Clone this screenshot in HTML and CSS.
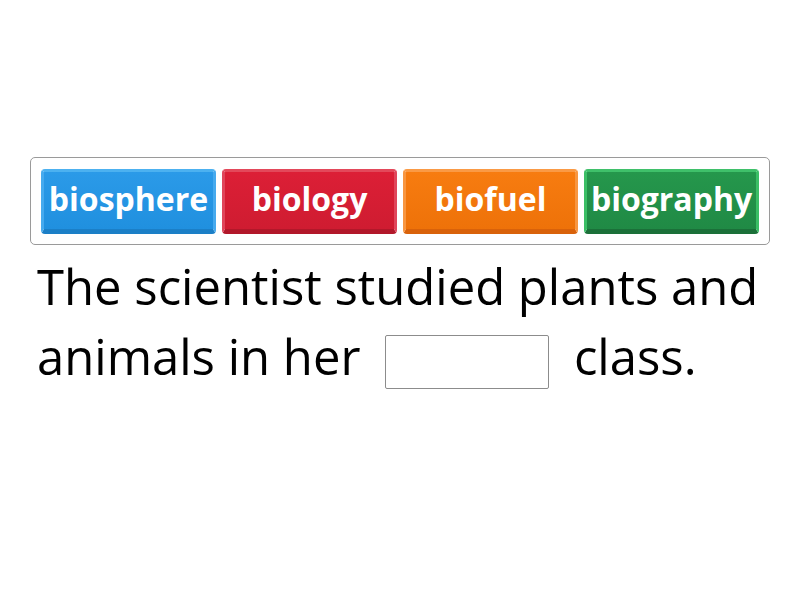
FILE: index.html
```html
<!DOCTYPE html>
<html>
<head>
<meta charset="utf-8">
<link rel="stylesheet" href="styles.css">
</head>
<body>
<div class="page">
  <div class="bank">
    <div class="tile blue">biosphere</div>
    <div class="tile red">biology</div>
    <div class="tile orange">biofuel</div>
    <div class="tile green">biography</div>
  </div>
  <p class="sentence">The scientist studied plants and animals in her <span class="gap"></span> class.</p>
</div>
</body>
</html>
```
FILE: styles.css
```css
html, body {
  margin: 0;
  padding: 0;
  background: #ffffff;
}
.page {
  width: 800px;
  height: 600px;
  padding-top: 157px;
  box-sizing: border-box;
}
.bank {
  margin-left: 30px;
  width: 740px;
  height: 88px;
  box-sizing: border-box;
  border: 1px solid #9a9a9a;
  border-radius: 5px;
  padding: 11px 10px;
  display: flex;
  gap: 6px;
}
.tile {
  width: 175px;
  height: 65px;
  box-sizing: border-box;
  border-radius: 4px;
  color: #ffffff;
  font-family: "Open Sans", sans-serif;
  font-weight: 700;
  font-size: 32px;
  display: flex;
  align-items: center;
  justify-content: center;
  white-space: nowrap;
  border-style: solid;
  border-width: 3px 3px 5px 3px;
  padding-bottom: 4px;
}
.blue {
  background: linear-gradient(#2b9ae8, #2090df);
  border-color: #4cb1f0 #46aaee #1b7fc7 #46aaee;
}
.red {
  background: linear-gradient(#dc1f36, #cf1c31);
  border-color: #e3485a #e0455a #b2182a #e0455a;
}
.orange {
  background: linear-gradient(#f77c10, #ee7209);
  border-color: #fa9a45 #f89640 #d9620a #f89640;
}
.green {
  background: linear-gradient(#25974c, #208a45);
  border-color: #3fc06a #3bbf66 #1b7039 #3bbf66;
}
.sentence {
  margin: 6px 0 0 37px;
  width: 740px;
  font-family: "Open Sans", sans-serif;
  font-size: 49px;
  line-height: 70px;
  color: #000000;
}
.gap {
  display: inline-block;
  width: 164px;
  height: 54px;
  box-sizing: border-box;
  border: 1px solid #8c8c8c;
  border-radius: 2px;
  vertical-align: -14px;
  margin: 0 12px;
}
```
